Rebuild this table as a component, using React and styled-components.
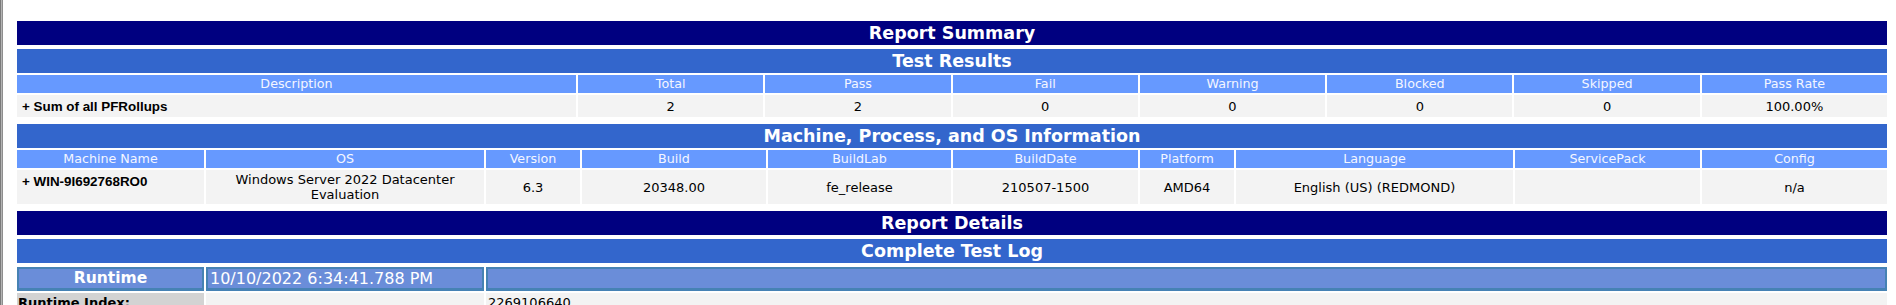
import React from "react";
import styled, { createGlobalStyle } from "styled-components";

const GlobalStyle = createGlobalStyle`
  html, body {
    margin: 0;
    padding: 0;
    height: 100%;
    background: #fff;
    overflow: hidden;
  }
  #root {
    height: 100%;
  }
`;

const testColumns = ["Description", "Total", "Pass", "Fail", "Warning", "Blocked", "Skipped", "Pass Rate"];
const testRow = ["Sum of all PFRollups", "2", "2", "0", "0", "0", "0", "100.00%"];

const machineColumns = [
  "Machine Name",
  "OS",
  "Version",
  "Build",
  "BuildLab",
  "BuildDate",
  "Platform",
  "Language",
  "ServicePack",
  "Config",
];
const machineRow = [
  "WIN-9I692768RO0",
  "Windows Server 2022 Datacenter Evaluation",
  "6.3",
  "20348.00",
  "fe_release",
  "210507-1500",
  "AMD64",
  "English (US) (REDMOND)",
  "",
  "n/a",
];

function App() {
  return (
    <>
      <GlobalStyle />
      <Page>
        <Frame />
        <Content>
          <Banner>Report Summary</Banner>

          <Table $cols="559px repeat(7, 1fr)" $mt={4}>
            <Caption>Test Results</Caption>
            {testColumns.map((c) => (
              <HeadCell key={c}>{c}</HeadCell>
            ))}
            {testRow.map((v, i) =>
              i === 0 ? (
                <NameCell key={i}>+ {v}</NameCell>
              ) : (
                <DataCell key={i}>{v}</DataCell>
              )
            )}
          </Table>

          <Table $cols="187px 278px 94px 184px 183px 185px 94px 277px 185px 185px" $mt={7} $row={34}>
            <Caption>Machine, Process, and OS Information</Caption>
            {machineColumns.map((c) => (
              <HeadCell key={c}>{c}</HeadCell>
            ))}
            {machineRow.map((v, i) =>
              i === 0 ? (
                <NameCell key={i}>+ {v}</NameCell>
              ) : (
                <DataCell key={i}>{v}</DataCell>
              )
            )}
          </Table>

          <Banner $mt={7}>Report Details</Banner>
          <Caption $block>Complete Test Log</Caption>

          <LogGrid>
            <RuntimeCell $label>Runtime</RuntimeCell>
            <RuntimeCell>10/10/2022 6:34:41.788 PM</RuntimeCell>
            <RuntimeCell />
            <IndexLabel>Runtime Index:</IndexLabel>
            <IndexValue />
            <IndexValue>2269106640</IndexValue>
          </LogGrid>
        </Content>
      </Page>
    </>
  );
}

const Page = styled.div`
  display: flex;
  height: 100%;
  min-height: 305px;
`;

const Frame = styled.div`
  width: 3px;
  flex-shrink: 0;
  background: linear-gradient(to right, #7a7a7a 0 1px, #b4b4b4 1px 2px, #8e8e8e 2px 3px);
`;

const Content = styled.div`
  flex: 1;
  padding: 21px 9px 0 14px;
  font-family: "DejaVu Sans", Verdana, sans-serif;
`;

const Banner = styled.div`
  height: 24px;
  margin-top: ${(p) => p.$mt || 0}px;
  background: #000080;
  color: #fff;
  font-weight: bold;
  font-size: 17.5px;
  line-height: 24px;
  text-align: center;
`;

const Caption = styled.div`
  grid-column: 1 / -1;
  height: 24px;
  margin-top: ${(p) => (p.$block ? 4 : 0)}px;
  background: #3366cc;
  color: #fff;
  font-weight: bold;
  font-size: 17.5px;
  line-height: 24px;
  text-align: center;
`;

const Table = styled.div`
  display: grid;
  grid-template-columns: ${(p) => p.$cols};
  grid-template-rows: 24px 18px ${(p) => p.$row || 22}px;
  gap: 2px;
  margin-top: ${(p) => p.$mt || 0}px;
`;

const HeadCell = styled.div`
  background: #6699ff;
  color: #f4f6ff;
  font-size: 12.7px;
  line-height: 18px;
  text-align: center;
  white-space: nowrap;
  overflow: hidden;
`;

const DataCell = styled.div`
  display: flex;
  align-items: center;
  justify-content: center;
  padding: 0 4px;
  background: #f3f3f3;
  color: #000;
  font-size: 13px;
  line-height: 15px;
  text-align: center;
`;

const NameCell = styled.div`
  padding: 4px 5px 0;
  background: #f3f3f3;
  color: #000;
  font-family: "Liberation Sans", Arial, sans-serif;
  font-weight: bold;
  font-size: 13.4px;
  line-height: 15px;
  white-space: nowrap;
`;

const LogGrid = styled.div`
  display: grid;
  grid-template-columns: 187px 278px 1fr;
  grid-template-rows: 24px 22px;
  column-gap: 2px;
  row-gap: 2px;
  margin-top: 4px;
`;

const RuntimeCell = styled.div`
  box-sizing: border-box;
  border: 2px solid #4682b4;
  border-bottom-width: 3px;
  background: #6a8dd9;
  color: #fff;
  padding: 0 2px;
  font-size: ${(p) => (p.$label ? "15.5px" : "16px")};
  font-weight: ${(p) => (p.$label ? "bold" : "normal")};
  line-height: 19px;
  text-align: ${(p) => (p.$label ? "center" : "left")};
  white-space: nowrap;
`;

const IndexLabel = styled.div`
  background: #d3d3d3;
  color: #000;
  font-weight: bold;
  font-size: 13px;
  line-height: 15px;
  padding: 2px 1px 0;
  white-space: nowrap;
`;

const IndexValue = styled.div`
  background: #f3f3f3;
  color: #000;
  font-size: 13px;
  line-height: 15px;
  padding: 2px 2px 0;
`;

export default App;
